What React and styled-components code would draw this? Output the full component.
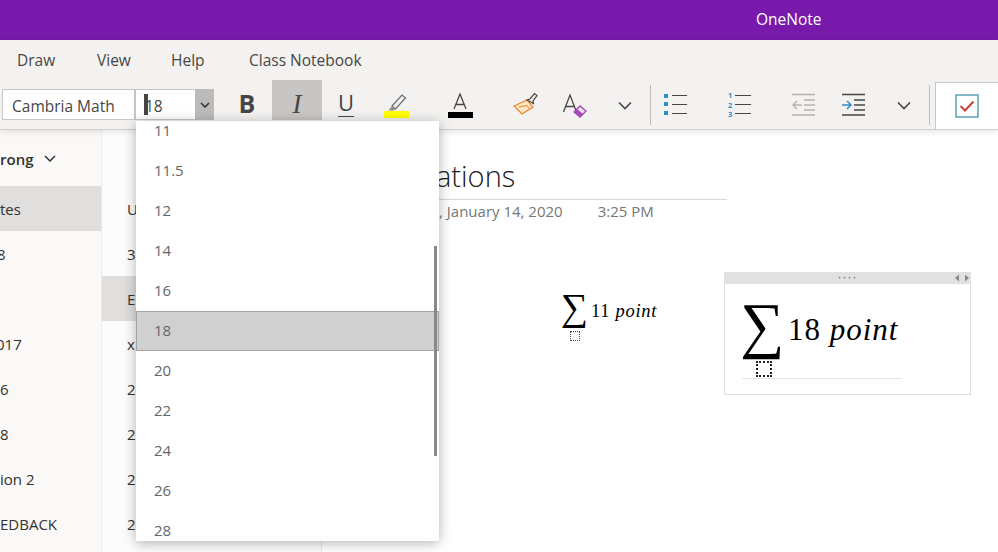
import React from 'react'
import styled, { createGlobalStyle } from 'styled-components';

const Global = createGlobalStyle`
  html, body {
    margin: 0;
    padding: 0;
    background: #fff;
    font-family: "Open Sans", "Noto Sans", sans-serif;
  }
`;

const sizes = ['11', '11.5', '12', '14', '16', '18', '20', '22', '24', '26', '28'];
const notebookRows = [
  { label: 'tes', active: true },
  { label: '8', shift: -3 },
  { label: '' },
  { label: '017', shift: -4 },
  { label: '6' },
  { label: '8' },
  { label: 'ion 2' },
  { label: 'EDBACK' },
];
const pageRows = [
  { label: 'U' },
  { label: '3' },
  { label: 'E', active: true },
  { label: 'x' },
  { label: '2' },
  { label: '2' },
  { label: '2' },
  { label: '2' },
];

const Chevron = () => (
  <svg width="50" height="40" viewBox="0 0 50 40">
    <path d="M19 22.5l6 6 6-6" fill="none" stroke="#484644" strokeWidth="1.6" />
  </svg>
);

const Highlighter = () => (
  <svg width="50" height="40" viewBox="0 0 50 40">
    <path d="M20 26l10-11 3.5 3-10 11z" fill="#f3f2f1" stroke="#6b6a69" strokeWidth="1.2" />
    <path d="M20 26l3.5 3-2 1.5h-5z" fill="#8d8c8b" />
    <rect x="12" y="31" width="25" height="7" fill="#ffff00" />
  </svg>
);

const FontColor = () => (
  <svg width="50" height="40" viewBox="0 0 50 40">
    <path d="M19 29L25 14l6 15M21 24.5h8" fill="none" stroke="#484644" strokeWidth="1.3" />
    <rect x="13" y="32" width="25" height="6" fill="#000" />
  </svg>
);

const Painter = () => (
  <svg width="50" height="40" viewBox="0 0 50 40">
    <path d="M14 26l13-6 6 7-11 7z" fill="#fde6c4" stroke="#e8872b" strokeWidth="1.3" />
    <path d="M19 27l8-1.5 2 3" fill="none" stroke="#e8872b" strokeWidth="1" />
    <path d="M27 20l3-1 4.5-5.5 2.5 2-4 5.5.5 2.5z" fill="#f3f2f1" stroke="#484644" strokeWidth="1.2" />
  </svg>
);

const ClearFormat = () => (
  <svg width="50" height="40" viewBox="0 0 50 40">
    <path d="M13.5 32L20 15l6.5 17M15.5 26.5h9" fill="none" stroke="#484644" strokeWidth="1.3" />
    <path d="M24 32l6-6 6 5-6 6z" fill="#f2dcf5" stroke="#a549b8" strokeWidth="1.3" />
    <path d="M24 32l3-3 6 5-3 3z" fill="#a549b8" />
  </svg>
);

const Bullets = () => (
  <svg width="50" height="40" viewBox="0 0 50 40">
    <g fill="#2f8fc4">
      <rect x="13" y="14" width="4" height="4" />
      <rect x="13" y="22" width="4" height="4" />
      <rect x="13" y="31" width="4" height="4" />
    </g>
    <path d="M21 15.5h15M21 24.5h15M21 33.5h15" stroke="#484644" strokeWidth="1.2" />
  </svg>
);

const Numbered = () => (
  <svg width="50" height="40" viewBox="0 0 50 40">
    <g fill="#2f8fc4" fontFamily="Open Sans" fontSize="7.5" fontWeight="700">
      <text x="15" y="18">1</text>
      <text x="15" y="27.5">2</text>
      <text x="15" y="37">3</text>
    </g>
    <path d="M22 15.5h16M22 24.5h16M22 33.5h16" stroke="#484644" strokeWidth="1.2" />
  </svg>
);

const Outdent = () => (
  <svg width="50" height="40" viewBox="0 0 50 40">
    <path d="M14 14.5h23M14 35h23M26 20h11M26 25h11M26 30h11" stroke="#b6b4b2" strokeWidth="1.4" />
    <path d="M24 25h-9M19 21l-4 4 4 4" fill="none" stroke="#b6b4b2" strokeWidth="1.5" />
  </svg>
);

const Indent = () => (
  <svg width="50" height="40" viewBox="0 0 50 40">
    <path d="M14 14.5h23M14 35h23M26 20h11M26 25h11M26 30h11" stroke="#484644" strokeWidth="1.4" />
    <path d="M14 25h9M19 21l4 4-4 4" fill="none" stroke="#2f8fc4" strokeWidth="1.5" />
  </svg>
);

const TodoCheck = () => (
  <svg width="26" height="26" viewBox="0 0 26 26">
    <rect x="2" y="2" width="22" height="22" fill="#fff" stroke="#6aa4bd" strokeWidth="1.6" />
    <path d="M6.5 13l4.5 4.5 8.5-9" fill="none" stroke="#c8403a" strokeWidth="2" />
  </svg>
);

const NoteArrows = () => (
  <svg width="14" height="8" viewBox="0 0 14 8">
    <path d="M4 .5v7L0 4zM10 .5v7l4-3.5z" fill="#8a8886" />
  </svg>
);

const Equation = ({ big, number }) => (
  <EquationRow $big={big}>
    <SumStack $big={big}>
      <Sigma $big={big}>∑</Sigma>
      <Placeholder $big={big} />
    </SumStack>
    <MathText $big={big}>
      {number} <i>point</i>
    </MathText>
  </EquationRow>
);

const App = () => {
  return (
    <Screen>
      <Global />
      <TitleBar>OneNote</TitleBar>
      <Ribbon>
        <TabRow>
          <Tab $w={80}>Draw</Tab>
          <Tab $w={74}>View</Tab>
          <Tab $w={78}>Help</Tab>
          <Tab>Class Notebook</Tab>
        </TabRow>
        <ToolRow>
          <FontBox>Cambria Math</FontBox>
          <SizeBox>
            <Caret />
            18
          </SizeBox>
          <SizeArrow>
            <svg width="10" height="6" viewBox="0 0 10 6">
              <path d="M1 1l4 4 4-4" fill="none" stroke="#323130" strokeWidth="1.6" />
            </svg>
          </SizeArrow>
          <ToolButton $ml={8}><BoldGlyph>B</BoldGlyph></ToolButton>
          <ToolButton $active><ItalicGlyph>I</ItalicGlyph></ToolButton>
          <ToolButton><UnderGlyph>U</UnderGlyph></ToolButton>
          <ToolButton><Highlighter /></ToolButton>
          <ToolButton $ml={13}><FontColor /></ToolButton>
          <ToolButton $ml={15}><Painter /></ToolButton>
          <ToolButton><ClearFormat /></ToolButton>
          <ToolButton><Chevron /></ToolButton>
          <Separator />
          <ToolButton><Bullets /></ToolButton>
          <ToolButton $ml={12}><Numbered /></ToolButton>
          <ToolButton $ml={15}><Outdent /></ToolButton>
          <ToolButton><Indent /></ToolButton>
          <ToolButton $ml={1}><Chevron /></ToolButton>
          <Separator />
          <TodoBox><TodoCheck /></TodoBox>
        </ToolRow>
      </Ribbon>
      <Body>
        <NotebookColumn>
          <NotebookHeader>
            rong
            <svg width="12" height="8" viewBox="0 0 12 8">
              <path d="M1 1l5 5 5-5" fill="none" stroke="#323130" strokeWidth="1.5" />
            </svg>
          </NotebookHeader>
          {notebookRows.map((row, index) => (
            <NavRow key={index} $active={row.active} $shift={row.shift}>{row.label}</NavRow>
          ))}
        </NotebookColumn>
        <PagesColumn>
          {pageRows.map((row, index) => (
            <NavRow key={index} $active={row.active} $indent={25}>{row.label}</NavRow>
          ))}
        </PagesColumn>
        <PagePane>
          <PageHead>
            <PageTitle>ations</PageTitle>
            <PageMeta>
              <span>, January 14, 2020</span>
              <span>3:25 PM</span>
            </PageMeta>
          </PageHead>
          <LooseEquation>
            <Equation number="11" />
          </LooseEquation>
          <NoteBox>
            <NoteHandle>
              <NoteDots>····</NoteDots>
              <NoteArrowSpot><NoteArrows /></NoteArrowSpot>
            </NoteHandle>
            <NoteContent>
              <Equation big number="18" />
            </NoteContent>
          </NoteBox>
        </PagePane>
      </Body>
      <SizeMenu>
        <SizeList>
          {sizes.map((size) => (
            <SizeItem key={size} $active={size === '18'}>{size}</SizeItem>
          ))}
        </SizeList>
        <MenuScrollbar />
      </SizeMenu>
    </Screen>
  )
}

const Screen = styled.div`
  position: relative;
  width: 998px;
  height: 552px;
  overflow: hidden;
  display: flex;
  flex-direction: column;
  background: #fff;
`;

const TitleBar = styled.div`
  height: 40px;
  flex: none;
  background: #7719aa;
  color: #fff;
  font-size: 15.5px;
  line-height: 39px;
  padding-left: 756px;
`;

const Ribbon = styled.div`
  height: 90px;
  flex: none;
  position: relative;
  z-index: 2;
  background: #f3f2f1;
  border-bottom: 1px solid #d2d0ce;
  box-sizing: border-box;
  box-shadow: 0 2px 6px rgba(0, 0, 0, 0.1);
`;

const TabRow = styled.div`
  height: 40px;
  box-sizing: border-box;
  padding: 0 0 1px 17px;
  display: flex;
  align-items: center;
`;

const Tab = styled.div`
  width: ${({ $w }) => ($w ? `${$w}px` : 'auto')};
  font-size: 15.5px;
  color: #484644;
`;

const ToolRow = styled.div`
  height: 49px;
  display: flex;
  align-items: flex-start;
  padding-left: 2px;
  overflow: hidden;
`;

const FontBox = styled.div`
  width: 133px;
  height: 31px;
  flex: none;
  margin-top: 9px;
  box-sizing: border-box;
  background: #fff;
  border: 1px solid #c8c6c4;
  padding-left: 9px;
  font-size: 15.5px;
  line-height: 32px;
  color: #484644;
`;

const SizeBox = styled(FontBox)`
  position: relative;
  width: 60px;
  border-right: none;
  padding-left: 9px;
`;

const Caret = styled.span`
  position: absolute;
  left: 8px;
  top: 4px;
  width: 4px;
  height: 21px;
  background: #484644;
`;

const SizeArrow = styled.div`
  width: 19px;
  height: 31px;
  flex: none;
  margin-top: 9px;
  background: #bdbbb9;
  display: flex;
  align-items: center;
  justify-content: center;
`;

const ToolButton = styled.div`
  width: 50px;
  height: 40px;
  flex: none;
  margin-left: ${({ $ml }) => $ml || 0}px;
  background: ${({ $active }) => ($active ? '#c8c6c4' : 'transparent')};
  display: flex;
  align-items: center;
  justify-content: center;
  svg {
    display: block;
  }
`;

const BoldGlyph = styled.span`
  font-family: "Open Sans", sans-serif;
  font-weight: 700;
  font-size: 25px;
  line-height: 25px;
  color: #484644;
  margin-top: 6px;
`;

const ItalicGlyph = styled.span`
  font-family: "Liberation Serif", serif;
  font-style: italic;
  font-size: 27px;
  line-height: 27px;
  color: #484644;
  margin-top: 8px;
`;

const UnderGlyph = styled.span`
  display: block;
  font-family: "Open Sans", sans-serif;
  font-size: 22px;
  line-height: 28px;
  color: #484644;
  margin: 5px 2px 0 0;
  border-bottom: 1.5px solid #484644;
`;

const Separator = styled.div`
  width: 1px;
  height: 40px;
  flex: none;
  margin-top: 5px;
  background: #bebcba;
`;

const TodoBox = styled.div`
  width: 64px;
  height: 48px;
  flex: none;
  margin: 2px 0 0 5px;
  box-sizing: border-box;
  background: #fff;
  border: 1px solid #c8c6c4;
  border-right: none;
  display: flex;
  align-items: center;
  justify-content: center;
  padding-right: 2px;
`;

const Body = styled.div`
  flex: 1;
  display: flex;
  min-height: 0;
`;

const NotebookColumn = styled.div`
  width: 102px;
  flex: none;
  box-sizing: border-box;
  background: #faf9f8;
  border-right: 1px solid #edebe9;
`;

const NotebookHeader = styled.div`
  height: 56px;
  box-sizing: border-box;
  padding-top: 2px;
  display: flex;
  align-items: center;
  gap: 11px;
  font-size: 15px;
  font-weight: 600;
  color: #323130;
`;

const PagesColumn = styled.div`
  width: 220px;
  flex: none;
  box-sizing: border-box;
  padding-top: 56px;
  background: #fdfcfc;
  border-right: 1px solid #edebe9;
`;

const NavRow = styled.div`
  height: 45px;
  padding-left: ${({ $indent }) => $indent || 0}px;
  text-indent: ${({ $shift }) => $shift || 0}px;
  display: flex;
  align-items: center;
  font-size: 15px;
  color: #323130;
  background: ${({ $active }) => ($active ? '#e1dfdd' : 'transparent')};
`;

const PagePane = styled.div`
  position: relative;
  flex: 1;
  background: #fff;
`;

const PageHead = styled.div`
  width: 405px;
  margin-top: 27px;
  box-sizing: border-box;
  padding-left: 118px;
`;

const PageTitle = styled.div`
  font-size: 29px;
  font-weight: 300;
  line-height: 38px;
  color: #1a1a1a;
  border-bottom: 1px solid #d8d8d8;
  margin-left: -118px;
  padding-left: 114px;
  height: 43px;
  box-sizing: border-box;
`;

const PageMeta = styled.div`
  display: flex;
  gap: 35px;
  margin: 1px 0 0 -1px;
  font-size: 15px;
  color: #767676;
`;

const LooseEquation = styled.div`
  position: absolute;
  left: 241px;
  top: 160px;
`;

const NoteBox = styled.div`
  position: absolute;
  left: 402px;
  top: 142px;
  width: 247px;
  height: 123px;
  box-sizing: border-box;
  border: 1px solid #dedede;
  border-top: none;
`;

const NoteHandle = styled.div`
  position: relative;
  height: 12px;
  margin: 0 -1px;
  background: #e1e1e1;
  display: flex;
  justify-content: center;
`;

const NoteDots = styled.span`
  font-family: "Liberation Sans", sans-serif;
  font-size: 12px;
  line-height: 11px;
  letter-spacing: 1px;
  color: #666;
`;

const NoteArrowSpot = styled.span`
  position: absolute;
  right: 2px;
  top: 2px;
  line-height: 0;
`;

const NoteContent = styled.div`
  margin: 18px 0 0 17px;
  width: 160px;
  height: 76px;
  border-bottom: 1px solid #e6e6e6;
`;

const EquationRow = styled.div`
  display: flex;
  align-items: flex-start;
  gap: ${({ $big }) => ($big ? 7 : 5)}px;
  color: #000;
  padding-left: ${({ $big }) => ($big ? 1 : 0)}px;
`;

const SumStack = styled.div`
  width: ${({ $big }) => ($big ? 38 : 23)}px;
  display: flex;
  flex-direction: column;
  align-items: center;
`;

const Sigma = styled.div`
  font-family: "Liberation Serif", serif;
  font-size: ${({ $big }) => ($big ? 62 : 38)}px;
  line-height: ${({ $big }) => ($big ? 46 : 35)}px;
  height: ${({ $big }) => ($big ? 59 : 41)}px;
`;

const Placeholder = styled.div`
  width: ${({ $big }) => ($big ? 16 : 10)}px;
  height: ${({ $big }) => ($big ? 16 : 10)}px;
  margin-left: ${({ $big }) => ($big ? 3 : 0)}px;
  box-sizing: border-box;
  border: ${({ $big }) => ($big ? '2px dotted #222' : '1px dotted #444')};
`;

const MathText = styled.div`
  font-family: "Liberation Serif", serif;
  font-size: ${({ $big }) => ($big ? 31 : 18.5)}px;
  letter-spacing: ${({ $big }) => ($big ? 1 : 0.7)}px;
  line-height: ${({ $big }) => ($big ? 38 : 22)}px;
  margin-top: ${({ $big }) => ($big ? 9 : 10)}px;
  white-space: nowrap;
`;

const SizeMenu = styled.div`
  position: absolute;
  z-index: 5;
  left: 136px;
  top: 121px;
  width: 303px;
  height: 420px;
  overflow: hidden;
  background: #fff;
  box-shadow: 0 2px 12px rgba(0, 0, 0, 0.3);
`;

const SizeList = styled.div`
  margin-top: -10px;
`;

const SizeItem = styled.div`
  height: 40px;
  box-sizing: border-box;
  padding: 0 0 2px 17px;
  display: flex;
  align-items: center;
  font-size: 15px;
  color: #666;
  background: ${({ $active }) => ($active ? '#d0d0d0' : 'transparent')};
  border: 1px solid ${({ $active }) => ($active ? '#a3a3a3' : 'transparent')};
`;

const MenuScrollbar = styled.div`
  position: absolute;
  right: 2px;
  top: 125px;
  width: 3px;
  height: 210px;
  background: #8a8886;
`;

export default App
